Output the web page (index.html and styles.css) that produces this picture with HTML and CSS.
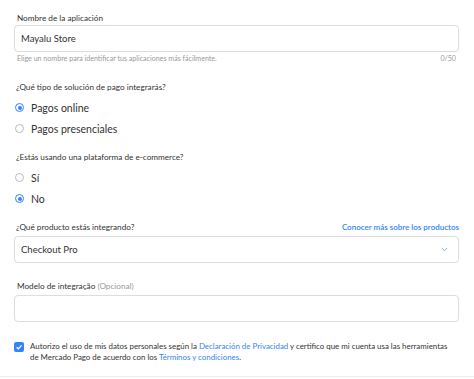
FILE: index.html
```html
<!DOCTYPE html>
<html lang="es">
<head>
<meta charset="utf-8">
<link rel="stylesheet" href="styles.css">
</head>
<body>
<div class="form">
  <div class="field">
    <div class="label">Nombre de la aplicación</div>
    <div class="input i1"><span class="value">Mayalu Store</span></div>
    <div class="helper"><span>Elige un nombre para identificar tus aplicaciones más fácilmente.</span><span>0/50</span></div>
  </div>

  <div class="group g1">
    <div class="label">¿Qué tipo de solución de pago integrarás?</div>
    <div class="radio checked"><span class="dot"></span><span>Pagos online</span></div>
    <div class="radio"><span class="dot"></span><span>Pagos presenciales</span></div>
  </div>

  <div class="group g2">
    <div class="label">¿Estás usando una plataforma de e-commerce?</div>
    <div class="radio"><span class="dot"></span><span>Sí</span></div>
    <div class="radio checked"><span class="dot"></span><span>No</span></div>
  </div>

  <div class="field f3">
    <div class="label row"><span>¿Qué producto estás integrando?</span><a class="link">Conocer más sobre los productos</a></div>
    <div class="input select"><span class="value">Checkout Pro</span>
      <svg class="chev" width="7" height="5" viewBox="0 0 7 5"><path d="M0.8 1 L3.5 3.7 L6.2 1" fill="none" stroke="#7fa8e6" stroke-width="1"/></svg>
    </div>
  </div>

  <div class="field f4">
    <div class="label">Modelo de integração <span class="opt">(Opcional)</span></div>
    <div class="input i4"></div>
  </div>

  <div class="consent">
    <span class="check"><svg width="10" height="10" viewBox="0 0 10 10"><path d="M2.6 5.2 L4.3 6.8 L7.5 3.4" fill="none" stroke="#fff" stroke-width="1.2"/></svg></span>
    <p>Autorizo el uso de mis datos personales según la <a class="link2">Declaración de Privacidad</a> y certifico que mi cuenta usa las herramientas de Mercado Pago de acuerdo con los <a class="link2">Términos y condiciones</a>.</p>
  </div>
</div>
<div class="bottom"></div>
</body>
</html>
```
FILE: styles.css
```css
html, body {
  margin: 0;
  padding: 0;
  background: #fff;
}
body {
  font-family: "Lato", "Liberation Sans", sans-serif;
  color: #333;
  width: 474px;
  height: 379px;
  overflow: hidden;
  position: relative;
}
.form {
  padding: 12px 15px 0 14px;
}
.label {
  font-size: 8.2px;
  line-height: 12px;
  color: #333;
  height: 12px;
  padding-left: 3px;
}
.label.row {
  display: flex;
  justify-content: space-between;
  padding-left: 2px;
}
.link {
  color: #3483fa;
  font-weight: 600;
  font-size: 8px;
}
.opt {
  color: #999;
}
.input {
  height: 25px;
  border: 1px solid #ddd;
  border-radius: 4px;
  display: flex;
  align-items: center;
  padding: 0 7px 0 6px;
  box-shadow: 0 0 1px rgba(0,0,0,0.05);
}
.i1 {
  margin-top: 1px;
}
.value {
  font-size: 9.5px;
  color: #333;
}
.select {
  margin-top: 3px;
  justify-content: space-between;
}
.chev {
  margin-right: 3px;
}
.i4 {
  margin-top: 3px;
}
.helper {
  display: flex;
  justify-content: space-between;
  font-size: 7.1px;
  color: #999;
  line-height: 10px;
  margin-top: 2px;
  padding: 0 3px 0 3px;
}
.group.g1 {
  margin-top: 17px;
}
.group.g2 {
  margin-top: 12px;
}
.radio {
  display: flex;
  align-items: center;
  gap: 7px;
  height: 21px;
  font-size: 10.5px;
  color: #333;
  padding-left: 1px;
}
.group .label {
  margin-bottom: 4px;
  padding-left: 2px;
}
.dot {
  width: 7px;
  height: 7px;
  border: 1px solid #bbb;
  border-radius: 50%;
  box-sizing: content-box;
  position: relative;
}
.radio.checked .dot {
  border-color: #3483fa;
}
.radio.checked .dot::after {
  content: "";
  position: absolute;
  left: 1.5px;
  top: 1.5px;
  width: 4px;
  height: 4px;
  border-radius: 50%;
  background: #3483fa;
}
.field.f3 {
  margin-top: 12px;
}
.field.f4 {
  margin-top: 17px;
}
.consent {
  margin-top: 19px;
  display: flex;
  align-items: flex-start;
  gap: 6px;
}
.check {
  width: 10px;
  height: 10px;
  border-radius: 2px;
  background: #3483fa;
  display: flex;
  flex-shrink: 0;
  margin-top: 1px;
}
.consent p {
  margin: 0;
  max-width: 418px;
  font-size: 7.9px;
  line-height: 11px;
  color: #333;
}
.link2 {
  color: #3483fa;
}
.bottom {
  position: absolute;
  left: 0;
  right: 0;
  bottom: 2px;
  height: 1px;
  background: #eee;
}
```
